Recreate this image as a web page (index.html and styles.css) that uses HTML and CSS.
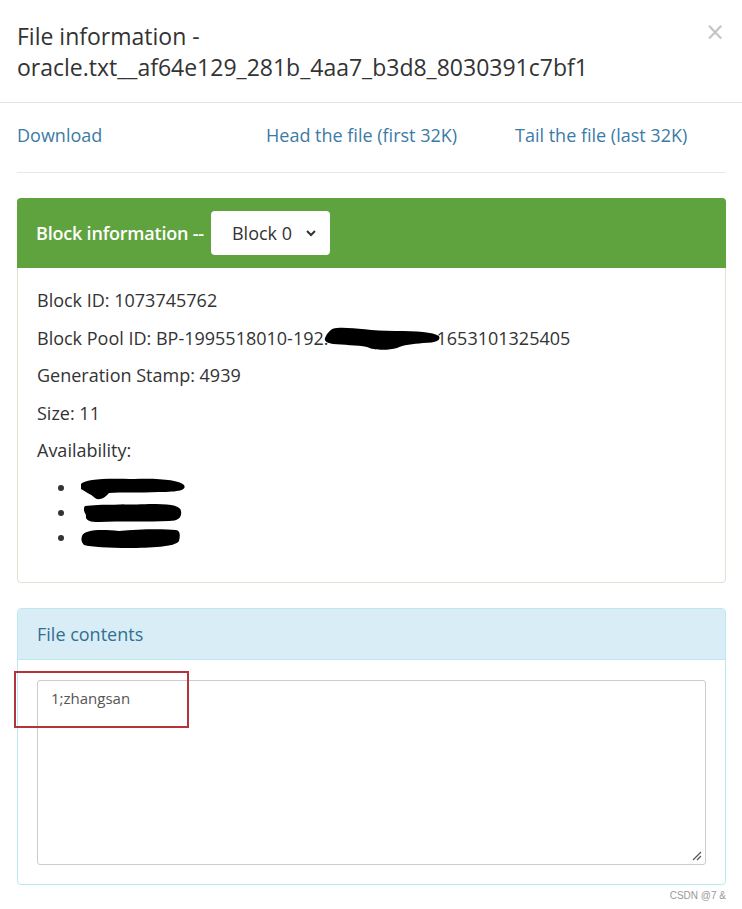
FILE: index.html
```html
<!DOCTYPE html>
<html>
<head>
<meta charset="utf-8">
<link rel="stylesheet" href="styles.css">
</head>
<body>
<div class="modal">
  <div class="modal-header">
    <h4 class="modal-title">File information -<br>oracle.txt__af64e129_281b_4aa7_b3d8_8030391c7bf1</h4>
    <span class="close">&times;</span>
  </div>
  <div class="modal-body">
    <div class="links">
      <a href="#">Download</a>
      <a href="#">Head the file (first 32K)</a>
      <a href="#">Tail the file (last 32K)</a>
    </div>
    <hr class="sep">
    <div class="panel panel-green">
      <div class="panel-heading">
        <span class="panel-title">Block information --</span>
        <span class="select">Block 0
          <svg class="chev" width="12" height="8" viewBox="0 0 12 8"><path d="M2 2 L6 6 L10 2" fill="none" stroke="#333" stroke-width="2"/></svg>
        </span>
      </div>
      <div class="panel-body">
        <p>Block ID: 1073745762</p>
        <p class="pool">Block Pool ID: BP-1995518010-192.<svg class="redact-inline" width="118" height="28" viewBox="0 0 118 28"><path d="M2 14 C4 9 8 4 14 4 C30 3 45 7 72 7 C94 7 110 8 116 12 C118 16 114 19 100 19 C90 20 80 21 74 24 C64 27 50 26 44 23 C34 21 20 21 10 20 C4 19 1 17 2 14 Z" fill="#000"/></svg>1653101325405</p>
        <p>Generation Stamp: 4939</p>
        <p>Size: 11</p>
        <p>Availability:</p>
        <ul class="avail">
          <li><svg class="blob" width="108" height="26" viewBox="0 0 108 26"><path d="M2 8 C6 3 25 2 55 3 C80 2 100 4 105 9 C108 14 100 16 80 16 C60 17 42 16 30 17 C26 22 20 25 16 22 C12 18 6 16 2 13 Z" fill="#000"/></svg></li>
          <li><svg class="blob" width="108" height="26" viewBox="0 0 108 26"><path d="M6 5 C20 3 50 4 70 3 C90 3 101 4 102 10 C103 16 100 20 90 20 C70 21 40 20 20 21 C10 21 6 19 7 14 C5 11 4 7 6 5 Z" fill="#000"/></svg></li>
          <li><svg class="blob" width="108" height="26" viewBox="0 0 108 26"><path d="M3 10 C5 4 20 3 40 5 C60 3 85 3 97 4 C102 5 101 11 100 15 C97 21 70 22 50 22 C30 22 12 21 5 19 C2 16 2 13 3 10 Z" fill="#000"/></svg></li>
        </ul>
      </div>
    </div>
    <div class="panel panel-blue">
      <div class="panel-heading">
        <span class="panel-title">File contents</span>
      </div>
      <div class="panel-body contents">
        <div class="textarea">1;zhangsan<svg class="grip" width="10" height="10" viewBox="0 0 10 10"><path d="M9 1 L1 9 M9 5 L5 9" stroke="#555" stroke-width="1.2"/></svg></div>
        <div class="highlight"></div>
      </div>
    </div>
    <div class="watermark">CSDN @7 &amp;</div>
  </div>
</div>
</body>
</html>
```
FILE: styles.css
```css
* { box-sizing: border-box; }
html, body { margin: 0; padding: 0; background: #fff; }
body {
  font-family: "Open Sans", "Noto Sans", sans-serif;
  color: #333;
  width: 742px;
  height: 909px;
  overflow: hidden;
}
.modal { width: 742px; }
.modal-header {
  position: relative;
  padding: 21px 17px 19px;
  border-bottom: 1px solid #e5e5e5;
}
.modal-title {
  margin: 0;
  font-weight: 400;
  font-size: 23px;
  line-height: 31px;
  color: #333;
}
.close {
  position: absolute;
  right: 17px;
  top: 18px;
  font-size: 24px;
  line-height: 28px;
  color: #c4c4c4;
  font-family: "DejaVu Sans", sans-serif;
}
.modal-body { padding: 20px 16px 0 17px; }
.links {
  display: grid;
  grid-template-columns: 249px 249px 1fr;
  font-size: 18px;
  line-height: 24px;
}
.links a { color: #3b7ba6; text-decoration: none; }
.sep {
  border: 0;
  border-top: 1px solid #e8e8e8;
  margin: 25px 0 25px;
}
.panel {
  border: 1px solid;
  border-radius: 4px;
  margin-bottom: 25px;
}
.panel-green { border-color: #dbe5d3; }
.panel-green .panel-heading {
  background: #5fa33e;
  color: #fff;
  height: 70px;
  display: flex;
  align-items: center;
  padding: 0 19px;
  margin: -1px -1px 0;
  border-radius: 4px 4px 0 0;
}
.panel-green .panel-title { font-size: 18px; font-weight: 600; letter-spacing: -0.2px; }
.select {
  margin-left: 7px;
  background: #fff;
  color: #333;
  border-radius: 4px;
  width: 119px;
  height: 44px;
  display: flex;
  align-items: center;
  padding-left: 21px;
  font-size: 18px;
  font-weight: 400;
  gap: 13px;
}
.panel-body { padding: 19px 19px 20px; }
.panel-body p {
  margin: 0 0 11.5px;
  font-size: 18px;
  line-height: 26px;
}
.pool { display: flex; align-items: center; height: 26px; }
.redact-inline { margin: 0 -4px 0 -6px; flex: none; }
.avail {
  margin: 0 0 12px;
  padding-left: 40px;
  font-size: 18px;
  line-height: 25px;
}
.avail li { height: 25px; }
.blob { vertical-align: middle; margin-left: 2px; }
.panel-blue { border-color: #bce8f1; margin-bottom: 5px; }
.panel-blue .panel-heading {
  background: #d9edf7;
  color: #31708f;
  height: 51px;
  display: flex;
  align-items: center;
  padding: 0 19px;
  border-bottom: 1px solid #bce8f1;
  border-radius: 3px 3px 0 0;
}
.panel-blue .panel-title { font-size: 18px; }
.contents { position: relative; padding: 20px 19px 19px; }
.textarea {
  position: relative;
  height: 185px;
  border: 1px solid #ccc;
  border-radius: 3px;
  padding: 7px 13px;
  font-size: 15px;
  line-height: 20px;
  color: #555;
}
.grip { position: absolute; right: 3px; bottom: 3px; }
.highlight {
  position: absolute;
  left: -4px;
  top: 11px;
  width: 175px;
  height: 57px;
  border: 2px solid #b3343b;
}
.watermark {
  text-align: right;
  font-size: 10px;
  color: #999;
  line-height: 12px;
  font-family: "Liberation Sans", sans-serif;
}
```
